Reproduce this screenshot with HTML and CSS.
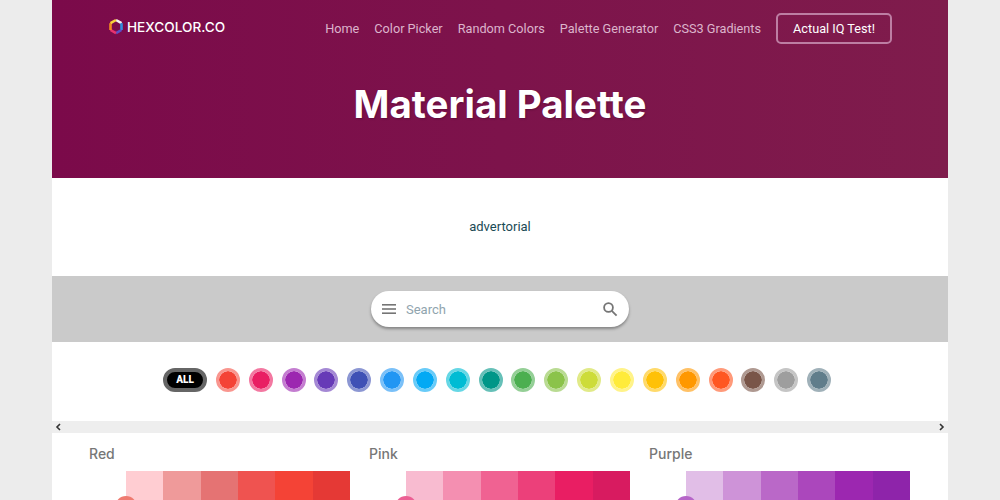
FILE: index.html
```html
<!DOCTYPE html>
<html lang="en">
<head>
    <meta charset="UTF-8">
    <meta name="viewport" content="width=device-width, initial-scale=1.0">
    <title>Material Palette</title>
    <link rel="stylesheet" href="styles.css">
</head>
<body>
    <div class="page">
        <header class="hero">
            <nav class="topbar">
                <a class="logo" href="#">
                    <svg class="logo-mark" width="16" height="18" viewBox="0 0 16 18" fill="none" stroke-width="2.6">
                        <path d="M8 2 L13.5 5.2" stroke="#f4f1f3"/>
                        <path d="M13.5 5.2 L13.5 12" stroke="#2f8fe0"/>
                        <path d="M13.5 12 L8 15.2" stroke="#5a4fc8"/>
                        <path d="M8 15.2 L2.5 12" stroke="#e8336e"/>
                        <path d="M2.5 12 L2.5 5.2" stroke="#f58a1f"/>
                        <path d="M2.5 5.2 L8 2" stroke="#f7d23a"/>
                    </svg>
                    HEXCOLOR.CO
                </a>
                <div class="nav-links">
                    <a href="#">Home</a>
                    <a href="#">Color Picker</a>
                    <a href="#">Random Colors</a>
                    <a href="#">Palette Generator</a>
                    <a href="#">CSS3 Gradients</a>
                    <a class="nav-btn" href="#">Actual IQ Test!</a>
                </div>
            </nav>
            <h1>Material Palette</h1>
        </header>

        <div class="ad">advertorial</div>

        <div class="search-band">
            <div class="search-box">
                <svg width="16" height="16" viewBox="0 0 16 16" fill="#757575">
                    <rect x="1" y="3" width="14" height="1.6"/>
                    <rect x="1" y="7.2" width="14" height="1.6"/>
                    <rect x="1" y="11.4" width="14" height="1.6"/>
                </svg>
                <span class="search-text">Search</span>
                <svg width="16" height="16" viewBox="0 0 16 16" fill="none" stroke="#757575" stroke-width="1.8">
                    <circle cx="6.5" cy="6.5" r="4.4"/>
                    <path d="M9.8 9.8 L14.6 14.6"/>
                </svg>
            </div>
        </div>

        <div class="filters">
            <span class="pill">ALL</span>
            <span class="dot c-red"></span>
            <span class="dot c-pink"></span>
            <span class="dot c-purple"></span>
            <span class="dot c-deep"></span>
            <span class="dot c-indigo"></span>
            <span class="dot c-blue"></span>
            <span class="dot c-light"></span>
            <span class="dot c-cyan"></span>
            <span class="dot c-teal"></span>
            <span class="dot c-green"></span>
            <span class="dot c-lgreen"></span>
            <span class="dot c-lime"></span>
            <span class="dot c-yellow"></span>
            <span class="dot c-amber"></span>
            <span class="dot c-orange"></span>
            <span class="dot c-dorange"></span>
            <span class="dot c-brown"></span>
            <span class="dot c-grey"></span>
            <span class="dot c-bgrey"></span>
        </div>

        <div class="scroller">
            <svg width="6" height="8" viewBox="0 0 6 8" fill="none" stroke="#333" stroke-width="1.6"><path d="M5 1 L2 4 L5 7"/></svg>
            <svg width="6" height="8" viewBox="0 0 6 8" fill="none" stroke="#333" stroke-width="1.6"><path d="M1 1 L4 4 L1 7"/></svg>
        </div>

        <div class="palettes">
            <section class="palette">
                <h2>Red</h2>
                <div class="strip">
                    <i style="background:#ffcdd2"></i><i style="background:#ef9a9a"></i><i style="background:#e57373"></i><i style="background:#ef5350"></i><i style="background:#f44336"></i><i style="background:#e53935"></i>
                    <span class="knob" style="background:#ef7a70"></span>
                </div>
            </section>
            <section class="palette">
                <h2>Pink</h2>
                <div class="strip">
                    <i style="background:#f8bbd0"></i><i style="background:#f48fb1"></i><i style="background:#f06292"></i><i style="background:#ec407a"></i><i style="background:#e91e63"></i><i style="background:#d81b60"></i>
                    <span class="knob" style="background:#ec5f94"></span>
                </div>
            </section>
            <section class="palette">
                <h2>Purple</h2>
                <div class="strip">
                    <i style="background:#e1bee7"></i><i style="background:#ce93d8"></i><i style="background:#ba68c8"></i><i style="background:#ab47bc"></i><i style="background:#9c27b0"></i><i style="background:#8e24aa"></i>
                    <span class="knob" style="background:#b665c8"></span>
                </div>
            </section>
        </div>
    </div>
</body>
</html>
```

FILE: styles.css
```css
html, body {
    height: 100%;
}
body {
    margin: 0;
    background: #ececec;
    font-family: Roboto, "Liberation Sans", sans-serif;
    overflow: hidden;
}
a {
    text-decoration: none;
    color: inherit;
}
.page {
    width: 896px;
    height: 500px;
    overflow: hidden;
    margin: 0 auto;
    background: #fff;
}

/* header */
.hero {
    height: 178px;
    box-sizing: border-box;
    padding: 13px 56px 0 56px;
    background: linear-gradient(90deg, #7b0a4a, #7f1c4c);
}
.topbar {
    display: flex;
    justify-content: space-between;
    align-items: flex-start;
}
.logo {
    display: flex;
    align-items: center;
    gap: 3px;
    height: 27px;
    color: #fff;
    font-family: Inter, Roboto, sans-serif;
    font-size: 13.6px;
    font-weight: 500;
}
.nav-links {
    display: flex;
    align-items: center;
    gap: 15px;
    height: 31px;
    color: #dcb4cb;
    font-size: 12.7px;
}
.nav-btn {
    padding: 0 15px;
    height: 31px;
    line-height: 27px;
    box-sizing: border-box;
    border: 2px solid #bd7ea3;
    border-radius: 5px;
    color: #fff;
}
.hero h1 {
    margin: 33px 0 0;
    text-align: center;
    color: #fff;
    font-family: Inter, Roboto, sans-serif;
    font-size: 38.5px;
    line-height: 54px;
    font-weight: 700;
    text-shadow: 1px 1px 2px rgba(0,0,0,0.25);
}

.ad {
    height: 98px;
    line-height: 98px;
    text-align: center;
    font-size: 13px;
    color: #1a4a55;
}

/* search */
.search-band {
    height: 66px;
    background: #cacaca;
    display: flex;
    justify-content: center;
    align-items: center;
}
.search-box {
    width: 258px;
    height: 36px;
    box-sizing: border-box;
    padding: 0 11px 0 10px;
    display: flex;
    align-items: center;
    background: #fff;
    border-radius: 18px;
    box-shadow: 0 2px 3px rgba(0,0,0,0.35);
}
.search-text {
    flex: 1;
    margin-left: 9px;
    font-size: 13px;
    color: #90a4ae;
}

/* colour filter */
.filters {
    height: 76px;
    padding: 0 0 3px 111px;
    display: flex;
    align-items: center;
    gap: 8.85px;
}
.pill {
    width: 36px;
    height: 16px;
    line-height: 16px;
    text-align: center;
    background: #000;
    border: 4px solid #666;
    border-radius: 12px;
    color: #fff;
    font-size: 10px;
    font-weight: 900;
}
.dot {
    width: 18px;
    height: 18px;
    border-radius: 50%;
    border: 3px solid;
    background-clip: padding-box;
}
.c-red { background-color: #f44336; border-color: #f9968f; }
.c-pink { background-color: #e91e63; border-color: #f378a1; }
.c-purple { background-color: #9c27b0; border-color: #c47dd0; }
.c-deep { background-color: #673ab7; border-color: #a488d4; }
.c-indigo { background-color: #3f51b5; border-color: #8c97d3; }
.c-blue { background-color: #2196f3; border-color: #7ac0f8; }
.c-light { background-color: #03a9f4; border-color: #68cbf8; }
.c-cyan { background-color: #00bcd4; border-color: #66d7e5; }
.c-teal { background-color: #009688; border-color: #66c0b8; }
.c-green { background-color: #4caf50; border-color: #94cf96; }
.c-lgreen { background-color: #8bc34a; border-color: #b9db92; }
.c-lime { background-color: #cddc39; border-color: #e1ea88; }
.c-yellow { background-color: #ffeb3b; border-color: #fff389; }
.c-amber { background-color: #ffc107; border-color: #ffda6a; }
.c-orange { background-color: #ff9800; border-color: #ffc166; }
.c-dorange { background-color: #ff5722; border-color: #ff9a7a; }
.c-brown { background-color: #795548; border-color: #af9991; }
.c-grey { background-color: #9e9e9e; border-color: #c5c5c5; }
.c-bgrey { background-color: #607d8b; border-color: #a0b1b9; }

.scroller {
    height: 12px;
    padding: 0 3px;
    display: flex;
    justify-content: space-between;
    align-items: center;
    background: #eee;
}

/* palettes */
.palettes {
    display: grid;
    grid-template-columns: repeat(3, 280px);
    padding: 12px 0 0 37px;
}
.palette h2 {
    margin: 0 0 9px;
    font-family: Inter, Roboto, sans-serif;
    font-size: 14px;
    line-height: 17px;
    font-weight: 500;
    color: #777;
}
.strip {
    position: relative;
    display: flex;
    width: 224px;
    height: 60px;
    margin-left: 37px;
}
.strip i {
    flex: 1;
}
.knob {
    position: absolute;
    left: -11px;
    top: 25px;
    width: 22px;
    height: 22px;
    border-radius: 50%;
}
```
